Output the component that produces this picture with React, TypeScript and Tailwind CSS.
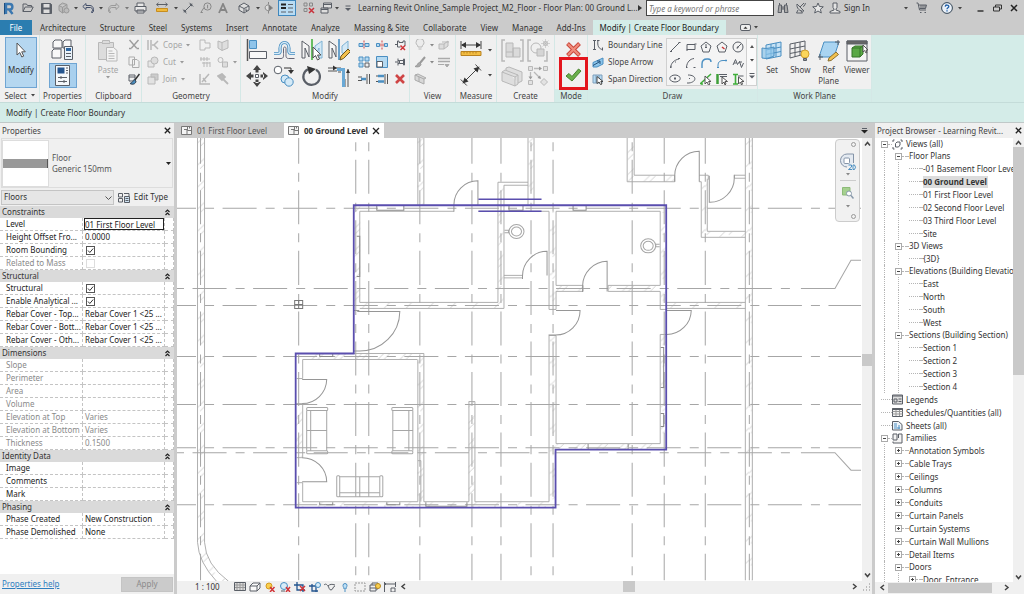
import type { ReactNode } from "react";

const DARK = "#5a5f67";
const BLUE = "#4a8fc2";
const SKY = "#b5daf2";
const OFF = "#b8b8b8";

function Ico({
  w = 12,
  h = 12,
  c = DARK,
  children,
}: {
  w?: number;
  h?: number;
  c?: string;
  children: ReactNode;
}) {
  return (
    <svg
      className="shrink-0"
      width={w}
      height={h}
      viewBox={`0 0 ${w} ${h}`}
      fill="none"
      stroke={c}
      aria-hidden="true"
    >
      {children}
    </svg>
  );
}

function Tool({
  label,
  className = "",
  children,
}: {
  label: string;
  className?: string;
  children: ReactNode;
}) {
  return (
    <button
      type="button"
      aria-label={label}
      className={`flex shrink-0 items-center justify-center ${className}`}
    >
      {children}
    </button>
  );
}

const Caret = ({ c = "#444" }: { c?: string }) => (
  <Ico w={4} h={3} c="none">
    <path d="M0 0h4L2 2.6z" fill={c} />
  </Ico>
);

/* quick access bar */

const quickTools: { label: string; slot: string; icon: ReactNode }[] = [
  {
    label: "Revit",
    slot: "w-4.5",
    icon: (
      <Ico w={12} h={13}>
        <path d="M3 12V2h3.700a2.700 2.700 0 0 1 0 5.400H3M6 7.500l3.600 4.600" stroke="#3b78b0" strokeWidth="2.400" />
        <path d="M1.500 12.300V1" stroke="#1d4e80" />
      </Ico>
    ),
  },
  {
    label: "Open",
    slot: "w-5",
    icon: (
      <Ico>
        <path d="M1 9.500V2h3.500l1 1.500h4V5M1 9.500 3.200 5h8L9 9.500z" />
      </Ico>
    ),
  },
  {
    label: "Save",
    slot: "w-4",
    icon: (
      <Ico w={11} h={11}>
        <path d="M.5.5h9l1 1v9H.5z" fill="#5a5f67" />
        <path d="M2.500 1h6v3.500h-6zM2.500 6.500h6V10h-6z" fill="#ddd" stroke="none" />
      </Ico>
    ),
  },
  {
    label: "Synchronize",
    slot: "w-5",
    icon: (
      <Ico c="#999">
        <path d="M1 3.500 4.500 1 9 2.500V8L4.500 11 1 8.500zM1 3.500l3.500 1.800L9 2.500M4.500 5.300V11" fill="#bbb" />
        <circle cx="8.500" cy="8.500" r="2.500" fill="#bbb" />
      </Ico>
    ),
  },
  { label: "Synchronize options", slot: "w-1", icon: <Caret /> },
  {
    label: "Undo",
    slot: "w-5",
    icon: (
      <Ico c="#44506a">
        <path d="M4 1.500.8 4.500 4 7.500V5.500h4.500a2.500 2.500 0 0 1 1 4.500l.5 1c3-2 1.500-7.500-2-7.500H4z" />
      </Ico>
    ),
  },
  { label: "Undo list", slot: "w-1.5", icon: <Caret /> },
  {
    label: "Redo",
    slot: "w-5",
    icon: (
      <Ico c="#9a9a9a">
        <path d="M8 1.500 11.200 4.500 8 7.500V5.500H3.500a2.500 2.500 0 0 0-1 4.500l-.5 1C-1 9 .5 3.500 4 3.500h4z" />
      </Ico>
    ),
  },
  { label: "Redo list", slot: "w-1.5", icon: <Caret c="#777" /> },
  {
    label: "Print",
    slot: "w-5",
    icon: (
      <Ico w={13}>
        <path d="M3 4V1h7v3M1 4.500h11V9H1zM3 8h7v3H3z" fill="#e8e8e8" />
      </Ico>
    ),
  },
  {
    label: "Measure",
    slot: "w-6",
    icon: (
      <Ico>
        <path d="M.5 2.500h11M2.500.8.7 2.500l1.800 1.700M9.500.8l1.800 1.700-1.800 1.700" />
        <path d="M.5 6.500h11v3H.5z" fill="#f0b93a" stroke="#c78d1f" />
      </Ico>
    ),
  },
  { label: "Measure options", slot: "w-1", icon: <Caret /> },
  {
    label: "Aligned Dimension",
    slot: "w-5",
    icon: (
      <Ico>
        <path d="m2 10 8-8M.8 7.500l3.700 3.700M7.500.8l3.700 3.700" />
        <path d="m1.500 10.500.8-3 2.200 2.200zM10.500 1.500l-3 .8 2.200 2.200z" fill={DARK} stroke="none" />
      </Ico>
    ),
  },
  {
    label: "Tag by Category",
    slot: "w-4",
    icon: (
      <Ico c="#888">
        <circle cx="7.500" cy="4.500" r="3.600" />
        <path d="M7.600 2.800v3.600M4 5.500.8 10.500M.8 10.500h2" />
      </Ico>
    ),
  },
  {
    label: "Text",
    slot: "w-4.5",
    icon: (
      <Ico w={10} h={11} c="#858585">
        <path d="M1 10 5 1l4 9M2.600 7h4.800" strokeWidth="1.800" />
      </Ico>
    ),
  },
  {
    label: "Default 3D View",
    slot: "w-6",
    icon: (
      <Ico>
        <path d="M1 4 6 1l5 3v4l-5 3-5-3z" fill="#ddd" />
        <path d="M1 4l5 2.500L11 4M6 6.500V11M8 6.500V9l1.500-.8" />
      </Ico>
    ),
  },
  { label: "View options", slot: "w-1", icon: <Caret /> },
  {
    label: "Section",
    slot: "w-4.5",
    icon: (
      <Ico w={10} h={12} c="#888">
        <path d="M4.500 3 7.500 5.500l-3 3a2.800 2.800 0 1 1 0-5.500z" fill="#ddd" />
        <path d="M5 3v5.500L8.500 6z" fill="#777" />
        <path d="M4.500 0v2.500M4.500 9v2.500" />
      </Ico>
    ),
  },
];

function TitleBar() {
  return (
    <header className="flex h-5 items-center bg-[#cbcbcb] pb-1 text-[8px] leading-3">
      {quickTools.map((t) => (
        <Tool key={t.label} label={t.label} className={`h-4 ${t.slot}`}>
          {t.icon}
        </Tool>
      ))}
      <Tool label="Thin Lines" className="h-4 w-4.5 border border-[#3f87bd] bg-[#b9dcf3]">
        <Ico w={14} h={11}>
          <path d="M1 1.500h5M1 5h5" stroke="#222" strokeWidth="2" />
          <path d="M1 9h5M8 1.500h5M8 5h5M8 9h5" />
        </Ico>
      </Tool>
      <Tool label="Close Inactive Views" className="ml-1 h-4 w-4.5">
        <Ico>
          <path d="M1 1h3v3H1zM6.500 1h3v3h-3zM1 6.500h3v3H1z" stroke="#888" />
          <path d="m6 6 5 5m0-5-5 5" stroke="#c8323c" strokeWidth="1.500" />
        </Ico>
      </Tool>
      <Tool label="Switch Windows" className="h-4 w-4">
        <Ico>
          <path d="M3.500 1h8v5h-8zM3.500 2.500h8M1 6h7v5H1zM1 7.500h7" fill="#ddd" />
        </Ico>
      </Tool>
      <Tool label="Window list" className="h-4 w-1.5">
        <Caret />
      </Tool>
      <Tool label="Customize" className="h-4 w-4">
        <Ico w={6} h={7}>
          <path d="M.5 1h5" />
          <path d="M0 3h6L3 6z" fill={DARK} stroke="none" />
        </Ico>
      </Tool>
      <h1 className="ml-0.5 shrink-0 text-[#333]">
        Learning Revit Online_Sample Project_M2_Floor - Floor Plan: 00 Ground L...
      </h1>
      <div className="flex-1" />
      <Ico w={4} h={6} c="none">
        <path d="M0 0v6l4-3z" fill="#333" />
      </Ico>
      <input
        aria-label="Search"
        placeholder="Type a keyword or phrase"
        className="ml-1 h-4 w-32 border border-[#444] bg-white px-0.5 italic leading-3 placeholder:text-[#777]"
      />
      <Tool label="Search help" className="h-4 w-4.5">
        <Ico>
          <path d="M1 10.500 2 3h2.500v7.500zM11 10.500 10 3H7.500v7.500zM4.500 5h3v2h-3zM2.500 3V1M9.500 3V1" fill="#aaa" />
        </Ico>
      </Tool>
      <Tool label="Communication Center" className="h-4 w-4.5">
        <Ico>
          <path d="M2 2a6 6 0 0 0 7 7zM3 8l-1.500 3h6L6 9M5 5l4-4M8 4.500C10 4 10 2 10.500 1" />
        </Ico>
      </Tool>
      <Tool label="Favorites" className="h-4 w-4">
        <Ico>
          <path d="m6 1 1.500 3.500 3.800.3-2.900 2.500.9 3.700L6 9l-3.300 2 .9-3.700L.7 4.800l3.800-.3z" fill="#e8e8e8" />
        </Ico>
      </Tool>
      <Tool label="Account" className="h-4 w-4.5">
        <Ico>
          <path d="M4 1h4v4.500L7 7v1l4 1.500V11H1V9.500L5 8V7L4 5.500z" fill="#e4e4e4" />
        </Ico>
      </Tool>
      <button type="button" className="shrink-0 text-[#333]">
        Sign In
      </button>
      <Tool label="Sign in options" className="ml-8 h-4 w-2">
        <Caret />
      </Tool>
      <Tool label="App Store" className="ml-1 h-4 w-4">
        <Ico>
          <path d="M.5 1H2l1.500 7H10M2.500 3h8L9.500 6.500H3.500M4 10.500h1.500M8.500 10.500H10M5 3v3.500M7 3v3.500M9 3v3.500" />
        </Ico>
      </Tool>
      <Tool label="Help" className="ml-2 h-4 w-4.5">
        <svg width="12" height="12" viewBox="0 0 12 12" aria-hidden="true">
          <circle cx="6" cy="6" r="5.400" fill="#e9f0f8" stroke="#345" />
          <path d="M4.200 4.600c.1-2.200 3.700-2 3.600 0C7.700 5.800 6 5.700 6 7.200M6 8.300v1.200" fill="none" stroke="#1f5fa8" strokeWidth="1.300" />
        </svg>
      </Tool>
      <Tool label="Help options" className="h-4 w-2">
        <Caret />
      </Tool>
      <Tool label="Minimize" className="ml-2 h-4 w-4">
        <Ico w={7} h={8}>
          <path d="M.5 7h6" stroke="#333" strokeWidth="1.500" />
        </Ico>
      </Tool>
      <Tool label="Restore" className="h-4 w-4.5">
        <Ico w={9} h={8}>
          <path d="M.5 3h6v4h-6zM2.500 3V1h6v4h-2" stroke="#333" />
        </Ico>
      </Tool>
      <Tool label="Close" className="mr-0.5 h-4 w-4">
        <Ico w={8} h={8}>
          <path d="m1 1 6 6m0-6L1 7" stroke="#222" strokeWidth="1.500" />
        </Ico>
      </Tool>
    </header>
  );
}

const ribbonTabs = [
  "Architecture",
  "Structure",
  "Steel",
  "Systems",
  "Insert",
  "Annotate",
  "Analyze",
  "Massing & Site",
  "Collaborate",
  "View",
  "Manage",
  "Add-Ins",
];

function RibbonTabs() {
  return (
    <nav className="flex h-[15px] bg-[#cbcbcb] text-[8px] leading-[15px] text-[#333]">
      <button type="button" className="mr-px w-8 shrink-0 bg-[#2b7db0] text-white">
        File
      </button>
      {ribbonTabs.map((t) => (
        <button key={t} type="button" className="shrink-0 px-[7px]">
          {t}
        </button>
      ))}
      <button type="button" className="shrink-0 bg-[#d4ece8] px-[7px] text-[#222]">
        Modify | Create Floor Boundary
      </button>
      <Tool label="Minimize Ribbon" className="ml-3.5 gap-0.5">
        <Ico w={12} h={7}>
          <rect x=".5" y=".5" width="10" height="6" rx="1.500" fill="#eee" />
          <path d="M3.500 4.800h4L5.500 2.500z" fill="#333" stroke="none" />
        </Ico>
        <Caret />
      </Tool>
    </nav>
  );
}

/* ribbon */

function Panel({
  title,
  className,
  mint,
  arrow,
  children,
}: {
  title: string;
  className: string;
  mint?: boolean;
  arrow?: boolean;
  children: ReactNode;
}) {
  return (
    <section
      className={`relative flex shrink-0 flex-col border-r border-[#d4e8e6] bg-[#f0f0f0] ${className}`}
    >
      <div className="flex h-[54px]">{children}</div>
      <h2
        className={`flex h-[13px] items-center justify-center gap-1 leading-3 ${mint ? "bg-[#d4ece8]" : ""}`}
      >
        {title}
        {arrow && <Caret />}
      </h2>
    </section>
  );
}

function ClipboardPanel() {
  return (
    <Panel title="Clipboard" className="w-14">
      <button type="button" className="flex w-9 shrink-0 flex-col items-center pt-1 pl-2 text-[#a5a5a5]">
        <Ico w={20} h={23} c={OFF}>
          <path d="M.5 3.500h4V1.500h7v2h4v17h-15z" fill="#dcdcdc" />
          <path d="M4 4.500h8M8.500 8.500h7l3.500 3V22H8.500zM10.500 12h4M10.500 14.500h6M10.500 17h6M10.500 19.500h6" fill="#f3f3f3" />
        </Ico>
        <span className="mt-0.5 leading-3">Paste</span>
        <Caret c="#999" />
      </button>
      <div className="flex flex-1 flex-col items-center gap-[5px] pt-1 pl-1">
        <Tool label="Cut to Clipboard">
          <Ico c="#9c9c9c">
            <path d="m1.500 1 7 8M10.500 1l-7 8M1 9.500h2.500M8.500 9.500H11" strokeWidth="1.400" />
          </Ico>
        </Tool>
        <Tool label="Copy to Clipboard">
          <Ico c="#ababab">
            <path d="M1 1h5.500v8H1zM4.500 3.500H9L11 5.500v6H4.500z" fill="#f2f2f2" />
          </Ico>
        </Tool>
        <Tool label="Match Type Properties">
          <Ico>
            <path d="M1 2h6v6H1zM1 4h6" />
            <path d="m11.500 1-5 6.500" stroke="#333" strokeWidth="1.500" />
            <path d="M6 6.500c-1 1-1 3-4 4 2.500 1.500 6 .5 6-2.500z" fill={BLUE} stroke="#345" />
          </Ico>
        </Tool>
      </div>
    </Panel>
  );
}

function GeometryPanel() {
  const rows = [
    {
      t: "Cope",
      a: <path d="M1 1v10M4 1v10M11 2 7 6l4 4M5 6h3" strokeWidth="1.500" />,
      b: <path d="M1 1h5v3h5v5H6v2H1z" />,
      c: <path d="m1 2 4 1.500L11 1v8l-6 2.500L1 9zM5 3.500v8" fill="#dedede" />,
    },
    {
      t: "Cut",
      a: (
        <>
          <path d="M1 5h6v6H1z" fill="#e6e6e6" />
          <circle cx="7.500" cy="4.500" r="3.500" fill="#ddd" />
        </>
      ),
      b: <path d="M1 3h10M2 1v4M5 1v4M8 1v4M3 7h8M5 6v5M8 6v5M11 6v5" />,
      c: (
        <>
          <circle cx="3.500" cy="4" r="2.500" />
          <path d="M5.500 6h5v5h-5z" fill="#ddd" />
        </>
      ),
    },
    {
      t: "Join",
      a: (
        <>
          <path d="M1 4h7v7H1z" fill="#e2e2e2" />
          <path d="M4 1h7v6H8V4H4z" fill="#ccc" />
        </>
      ),
      b: <path d="M1 1v10h10M3 9l7-8M4 5l3 4" strokeWidth="1.500" />,
      c: <path d="M1 3 5 1l3 3-3 3zM6 6l5 5" strokeWidth="1.800" fill="#bbb" />,
    },
  ];
  return (
    <Panel title="Geometry" className="w-[99px]">
      <div className="flex flex-1 flex-col gap-[5px] pt-1 pl-[5px] text-[#a5a5a5]">
        {rows.map((r) => (
          <div key={r.t} className="flex h-3 items-center">
            <button type="button" className="flex w-12 items-center gap-1 leading-3">
              <Ico c={OFF}>{r.a}</Ico>
              {r.t}
              <Caret c="#999" />
            </button>
            <Tool label={`${r.t} modifier`} className="ml-0.5 w-4">
              <Ico c={OFF}>{r.b}</Ico>
            </Tool>
            <Tool label={`${r.t} face`} className="ml-0.5 mr-0.5 w-4">
              <Ico c={OFF}>{r.c}</Ico>
            </Tool>
            {r.t === "Cut" && <Caret c="#999" />}
          </div>
        ))}
      </div>
    </Panel>
  );
}

const bigModify: { label: string; icon: ReactNode }[] = [
  {
    label: "Align",
    icon: (
      <>
        <path d="M1.500 0v22" stroke="#555" strokeWidth="1.500" />
        <path d="M3.500 1.500h7v8h-7z" fill="#8fc4ea" stroke={BLUE} />
        <path d="M3.500 12.500h17v7h-17z" fill="#f8f8f8" />
      </>
    ),
  },
  {
    label: "Offset",
    icon: (
      <>
        <path d="M1 14.500h4c3 0 2-3 2-5 0-8 9-8 9 0 0 2-1 5 2 5h4" stroke={BLUE} strokeWidth="3.200" />
        <path d="M1 14.500h4c3 0 2-3 2-5 0-8 9-8 9 0 0 2-1 5 2 5h4" stroke="#d8ecf8" strokeWidth="1.400" />
        <path d="M1 19.500h7c3 0 2.500-3 2.500-5V9.500c0-2 2.500-2 2.500 0v5c0 2-.5 5 2.500 5h6" stroke="#667" />
      </>
    ),
  },
  {
    label: "Mirror - Pick Axis",
    icon: (
      <>
        <path d="M1 2v17h3V9l4 9V7z" fill="#f5f5f5" />
        <path d="M21 2v17h-3V9l-4 9V7z" fill="#d4e9f6" stroke="#7fb2d4" />
        <path d="M11 0v21" stroke="#45b23f" strokeWidth="1.600" />
        <path d="M12 8v11l2.500-2.500L16.500 21l2-1-2-4H20z" fill="#fff" stroke="#555" />
      </>
    ),
  },
  {
    label: "Mirror - Draw Axis",
    icon: (
      <>
        <path d="M1 2v17h3V9l4 9V7z" fill="#f5f5f5" />
        <path d="M20 2v13l-6-1V7z" fill="#d4e9f6" stroke="#7fb2d4" />
        <path d="M11 0v21" stroke={BLUE} strokeWidth="1.600" />
        <path d="m12 21 1-4 7-7 2.500 2.500-7 7z" fill="#f2c14e" stroke="#6b5420" />
      </>
    ),
  },
  {
    label: "Move",
    icon: (
      <>
        <path d="m11 0 4 5H7zM11 22l4-5H7zM0 11l5-4v8zM22 11l-5-4v8zM9.500 4h3v3.500h-3zM9.500 14.500h3V18h-3zM4 9.500h3.500v3H4zM14.500 9.500H18v3h-3.500z" fill="#444" stroke="none" />
        <path d="M9.500 9.500h3v3h-3z" fill="#fff" />
      </>
    ),
  },
  {
    label: "Copy",
    icon: (
      <>
        <circle cx="5" cy="5" r="3.800" fill="#fff" />
        <path d="M11 3h7v3" stroke="#333" />
        <path d="m18 9-3-4h6z" fill="#333" stroke="none" />
        <circle cx="12" cy="14" r="4" fill="#d4e9f6" stroke={BLUE} />
        <circle cx="16" cy="17" r="4.200" fill="#d4e9f6" stroke={BLUE} />
      </>
    ),
  },
  {
    label: "Rotate",
    icon: (
      <>
        <path d="M7 4.200A8.300 8.300 0 1 0 15 4.600" strokeWidth="2.200" />
        <path d="m6 1 9 3-7 5z" fill="#333" stroke="none" />
      </>
    ),
  },
  {
    label: "Trim",
    icon: (
      <>
        <path d="M0 3h13M0 6h9M10 7h3M20 22V4M17 22v-8" stroke="#555" />
        <path d="M9 4.500h6.500V22" stroke="#6aa9d6" strokeWidth="3" />
        <path d="m5 .5 4 2.500-4 2.500zM18 8l2-4 2 4z" fill="#333" stroke="none" />
      </>
    ),
  },
];

const smallModify: { label: string; icon: ReactNode }[] = [
  {
    label: "Split Element",
    icon: (
      <>
        <path d="M1 4.500h4v3H1zM7 4.500h4v3H7z" fill={SKY} stroke={BLUE} />
        <path d="M6 1.500v9" stroke="#d04040" strokeDasharray="2 1" />
      </>
    ),
  },
  {
    label: "Split with Gap",
    icon: (
      <>
        <path d="M.5 4.500h3v3h-3zM8.500 4.500h3v3h-3z" fill={SKY} stroke={BLUE} />
        <path d="M5 4.500v3M7 4.500v3M6 1.500v2M6 8.500v2" stroke="#d04040" />
      </>
    ),
  },
  {
    label: "Unpin",
    icon: (
      <>
        <path d="M1 5.500h2M3.500 2h1.500v1.500h4V2H11v5M3.500 2v6h3" />
        <path d="m6.500 6.500 4.500 4.500m0-4.500L6.500 11" stroke="#d13438" strokeWidth="1.500" />
      </>
    ),
  },
  {
    label: "Array",
    icon: (
      <>
        <path d="M1 1h4v4H1zM7 1h4v4H7zM1 7h4v4H1z" fill={SKY} stroke={BLUE} />
        <path d="M7 7h4v4H7z" fill="#eee" />
      </>
    ),
  },
  {
    label: "Scale",
    icon: (
      <>
        <path d="M.5.5h11v11h-11z" fill={SKY} stroke={BLUE} />
        <path d="M1 5.500h5.500V11H1z" fill="#fff" />
      </>
    ),
  },
  { label: "Pin", icon: <path d="M1 6h2.500M4 2.500v7M5.500 4.500h4M5.500 7.500h4M4 4.500h1.500v3H4M9.500 3h1v6h-1z" /> },
  {
    label: "Trim Single",
    icon: (
      <>
        <path d="M0 4h4M0 7.500h4M9 1v10M11.500 1v10" stroke="#555" />
        <path d="M3 6h5" stroke={BLUE} strokeWidth="2.500" />
      </>
    ),
  },
  {
    label: "Trim Multiple",
    icon: (
      <>
        <path d="M0 3h3M0 8.500h3M9 1v10M11.500 1v10" stroke="#555" />
        <path d="M2 3h6M2 8.500h6" stroke={BLUE} strokeWidth="2.500" />
      </>
    ),
  },
  {
    label: "Delete",
    icon: <path d="m2 2 8 8m0-8-8 8" stroke="#cf4545" strokeWidth="2.600" />,
  },
];

function ModifyPanel() {
  return (
    <Panel title="Modify" className="w-[169px]">
      <div className="grid h-13 w-28 grid-cols-4 content-start items-center justify-items-center gap-y-1 pt-1 pl-0.5">
        {bigModify.map((m) => (
          <Tool key={m.label} label={m.label}>
            <Ico w={22} h={22}>
              {m.icon}
            </Ico>
          </Tool>
        ))}
      </div>
      <div className="grid w-14 grid-cols-3 content-start justify-items-center gap-y-[5px] pt-1 pl-0.5">
        {smallModify.map((m) => (
          <Tool key={m.label} label={m.label}>
            <Ico>{m.icon}</Ico>
          </Tool>
        ))}
      </div>
    </Panel>
  );
}

function ViewPanel() {
  return (
    <Panel title="View" className="w-[46px]">
      <div className="grid w-full grid-cols-[20px_4px_20px] content-start items-center justify-items-center gap-y-[5px] pt-1">
        <Tool label="Hide">
          <Ico c={OFF}>
            <path d="M4 8c0-2-2-2-2-4.500a4 4 0 0 1 8 0C10 6 8 6 8 8zM4.500 10h3" fill="#ececec" />
          </Ico>
        </Tool>
        <Caret c="#888" />
        <Tool label="Override">
          <Ico c={OFF}>
            <path d="M1 5h5v5H1zM6 5l4-3v5L6 10M4 3h4M8 3h3" fill="#ddd" />
          </Ico>
        </Tool>
        <Tool label="Line brush">
          <Ico c="#9a9a9a">
            <path d="m11 1-5 6" strokeWidth="2" />
            <path d="M5.500 6.500c-2 0-1.500 3-4.500 4 3 1 6 0 6-2.500z" fill="#aaa" />
          </Ico>
        </Tool>
        <Caret c="#888" />
        <Tool label="Linework">
          <Ico c="#aaa">
            <path d="M0 2.500h12M0 5.500h12" strokeWidth="1.500" />
            <path d="M0 8.500h6M7 8.500h4L9 11z" fill="#aaa" />
          </Ico>
        </Tool>
        <Tool label="Selection box">
          <Ico c="#aaa">
            <path d="m1 2 9 4v5L1 7zM1 2l3-1 8 4-2 1M5 4v5" fill="#d8d8d8" />
          </Ico>
        </Tool>
      </div>
    </Panel>
  );
}

function MeasurePanel() {
  return (
    <Panel title="Measure" className="w-[41px]">
      <div className="grid w-full grid-cols-[30px_8px] content-start items-center justify-items-center gap-y-0.5 pt-1">
        <Tool label="Measure Between">
          <Ico w={22} h={22}>
            <path d="M2 6h18M1 2v8M21 2v8" stroke="#444" />
            <path d="m1 6 5-3v6zM21 6l-5-3v6z" fill="#333" stroke="none" />
            <path d="M1 12.500h20v4H1zM4 12.500v2M7 12.500v2M10 12.500v2M13 12.500v2M16 12.500v2" fill="#f3bd42" stroke="#b98220" />
          </Ico>
        </Tool>
        <Caret />
        <Tool label="Dimension">
          <Ico w={22} h={24}>
            <path d="m3 20 16-16M.8 16.500l6 6M15.500 1.500l5.500 6" stroke="#444" />
            <path d="m2.500 20.500 2-6 4 4zM19.500 3.500l-6 2 4 4z" fill="#333" stroke="none" />
          </Ico>
        </Tool>
        <Caret />
      </div>
    </Panel>
  );
}

function CreatePanel() {
  return (
    <Panel title="Create" className="w-[58px]">
      <div className="grid w-full grid-cols-2 content-start justify-items-center gap-x-0.5 gap-y-0.5 px-1 pt-1">
        <Tool label="Create Assembly">
          <Ico w={23} h={23} c={OFF}>
            <path d="M4 1H1v21h3M19 1h3v21h-3" strokeWidth="1.500" />
            <path d="M5 4h7v14H5zM12 9h7v9h-7zM5 13h7" fill="#dadada" />
          </Ico>
        </Tool>
        <Tool label="Create Group">
          <Ico w={23} h={23} c={OFF}>
            <path d="M4 1H1v21h3M17 22h3V12" strokeWidth="1.500" />
            <circle cx="9" cy="9" r="5" />
            <path d="M10 10h7v7h-7z" fill="#d5d5d5" />
            <circle cx="18.500" cy="4.500" r="2" />
            <path d="M18.500 0v9M14 4.500h9M15.500 1.500l6 6M21.500 1.500l-6 6" strokeWidth=".6" />
          </Ico>
        </Tool>
        <Tool label="Create Parts">
          <Ico w={23} h={23} c={OFF}>
            <path d="M1 8v9l13 5v-9zM1 8l3-2 13 5-3 2M17 11v9l-3 2M5 6V4l3-1 13 5v9l-4 2" fill="#dedede" />
          </Ico>
        </Tool>
        <Tool label="Create Similar">
          <Ico w={23} h={23} c={OFF}>
            <path d="M1.500 2.500h4v4h-4zM16.500 2.500h4v4h-4zM1.500 16.500h4v4h-4zM17 14.500l3.500 3.500-3.500 3.500-3.500-3.500z" fill="#e2e2e2" />
            <path d="M7 4.500h7M3.500 8v6M7 8l6 6" strokeWidth="1.300" />
            <path d="m15 4.500-3-2v4zM3.500 15.500l-2-3h4zM14 15l-3.500-1 2.500-2.500z" fill="#999" stroke="none" />
          </Ico>
        </Tool>
      </div>
    </Panel>
  );
}

const drawModes: { label: string; icon: ReactNode }[] = [
  {
    label: "Boundary Line",
    icon: <path d="M2.500 1v10M6 1c-1 6 1 9 4.500 9.500M1 1.500h3M1 10.500h3M5 1.500h2.500M10.500 8.500v3" />,
  },
  {
    label: "Slope Arrow",
    icon: (
      <>
        <path d="M1 6.500 11 2v6l-6 3H1z" fill="#8cc5ea" stroke={BLUE} />
        <path d="m1 9.500 7-4M8 8V5H5" stroke="#24507a" />
      </>
    ),
  },
  {
    label: "Span Direction",
    icon: (
      <>
        <path d="M1 2h9v8H1zM4 2v8M7 2v8" fill={SKY} stroke="#7f9fbc" />
        <path d="M5 3.500v7L7 9l1.500 2.500L10 11 8.800 8.500H11z" fill="#fff" stroke="#444" />
      </>
    ),
  },
];

const shapes: { label: string; icon: ReactNode }[] = [
  { label: "Line", icon: <path d="M2 10 10 2M1 10.500h2M9.500 1.500h2" /> },
  { label: "Rectangle", icon: <path d="M2 3.500h8v5H2zM1 9h2M9.500 3h2" /> },
  { label: "Inscribed Polygon", icon: <path d="m6 1 5 4-2 6H3L1 5zM6 3v4M5 6.500h2" /> },
  {
    label: "Circumscribed Polygon",
    icon: (
      <>
        <path d="m6 1 5 4-2 6H3L1 5z" />
        <path d="m6 6 2.500 2" stroke="#c33" strokeWidth="1.500" />
      </>
    ),
  },
  {
    label: "Circle",
    icon: (
      <>
        <circle cx="6" cy="6" r="5" />
        <path d="m5 7 4-4M6 5v2H4.500" />
      </>
    ),
  },
  { label: "Start-End-Radius Arc", icon: <path d="M1.500 11C2 6 5 3 10 2M1 10h2M9 1.500h2M6 5h1" /> },
  { label: "Center-ends Arc", icon: <path d="M1.500 10C2 5 5 2 9 1.500M8.500 10.500h2M1 10.500h1.500" /> },
  { label: "Tangent End Arc", icon: <path d="M2 11V7c0-3 2-5 5-5h1c2 0 3 1 3 3" stroke={BLUE} strokeWidth="1.400" /> },
  { label: "Fillet Arc", icon: <path d="M2 11V8c0-3 2-4.500 5-4.500h4M1 10.500h2M10 2.500v2" stroke={BLUE} /> },
  { label: "Spline", icon: <path d="M1 8 3.500 2.500l2 5 2-3 2 6L11.500 6M2 6h2.500M7 5h3" /> },
  {
    label: "Ellipse",
    icon: (
      <>
        <ellipse cx="6" cy="5.500" rx="5.200" ry="3.500" />
        <path d="M6 4v3M5 5.500h2" />
      </>
    ),
  },
  { label: "Partial Ellipse", icon: <path d="M3 2c9 0 9 7 1 8M2 10h2M4 5.500h1" /> },
  {
    label: "Pick Lines",
    icon: (
      <>
        <path d="m0 11 11-10M1 11h2" stroke="#3fae3a" strokeWidth="1.500" />
        <path d="M5 3v8l2-2 1.500 3L10 11 8.500 8.500H11z" fill="#fff" stroke="#555" />
      </>
    ),
  },
  {
    label: "Pick Walls",
    icon: (
      <>
        <path d="M1.500 1v10" stroke="#3f9f3a" strokeWidth="2.500" />
        <path d="M3 1.500h8M4 3.500h7" />
        <path d="M6 4v7l2-2 1 3 1-1-1-2.500h2.500z" fill="#fff" stroke="#555" />
      </>
    ),
  },
  {
    label: "Pick Supports",
    icon: (
      <>
        <path d="M1 1.500h5M3.500 1.500V11M1 11h5" stroke="#3fae3a" strokeWidth="1.600" />
        <path d="M6 3h5.500" />
        <path d="M6.500 4v7l2-2 1 3 1-1-1-2.500H12z" fill="#fff" stroke="#555" />
      </>
    ),
  },
];

function DrawPanel() {
  return (
    <Panel title="Draw" mint className="w-[170px]">
      <div className="flex w-[78px] shrink-0 flex-col gap-[5px] pt-1 pl-1">
        {drawModes.map((d) => (
          <button key={d.label} type="button" className="flex items-center gap-1 whitespace-nowrap leading-3">
            <Ico>{d.icon}</Ico>
            {d.label}
          </button>
        ))}
      </div>
      <div className="mt-[3px] flex h-12 flex-1 border border-[#d0d0d0] bg-[#f4f4f4]">
        <div className="grid flex-1 grid-cols-5 content-start justify-items-center gap-y-1 pt-0.5">
          {shapes.map((s) => (
            <Tool key={s.label} label={s.label}>
              <Ico>{s.icon}</Ico>
            </Tool>
          ))}
        </div>
        <div className="flex w-2.5 flex-col items-center justify-around border-l border-[#d0d0d0] bg-[#fafafa]">
          <Ico w={4} h={3} c="none">
            <path d="M0 3h4L2 0z" fill="#555" />
          </Ico>
          <Caret />
          <Ico w={6} h={6}>
            <path d="M.5.5h5" />
            <path d="M0 2.500h6l-3 3z" fill={DARK} stroke="none" />
          </Ico>
        </div>
      </div>
    </Panel>
  );
}

const planeTools: { label: string; icon: ReactNode }[] = [
  {
    label: "Set",
    icon: (
      <>
        <path d="m5 5 15-3v14L5 19z" fill="#c6e2f5" stroke={BLUE} />
        <path d="M10 4v14M15 3v14M5 10l15-3M5 14.500l15-3" stroke={BLUE} />
        <path d="M1 8c4 1 8 0 12-1v9c-4 2-8 3-12 2z" fill="#8cc5ea" fillOpacity=".7" stroke={BLUE} />
      </>
    ),
  },
  {
    label: "Show",
    icon: (
      <>
        <path d="m1 4 15-3v13L1 18zM6 3v14M11 2v13M1 9l15-3M1 13.500l15-3" />
        <circle cx="16" cy="14" r="4" fill="#fbd65c" stroke="#d0a030" />
        <path d="M14.500 18.500h3v2h-3z" fill="#999" />
      </>
    ),
  },
  {
    label: "Ref Plane",
    icon: (
      <>
        <path d="M6 2h15l-5 15H1z" fill="#a9d4f1" stroke={BLUE} />
        <path d="M0 17h5M2 14v6M17 2h5M20 0v5" />
        <path d="m10 21 1-3 7-6 2.500 2.500-7.500 6z" fill="#f2c14e" stroke="#8b7030" />
      </>
    ),
  },
  {
    label: "Viewer",
    icon: (
      <>
        <path d="M1 1h20v20H1z" fill="#f5f5f5" />
        <path d="M1 1h20v3H1z" fill="#666" />
        <path d="m6 8 3-2h8v8l-3 3H6z" fill="#5aa845" stroke="#37752a" />
        <path d="M6 8h8v9M14 8l3-2" stroke="#37752a" />
        <path d="M17 5v7l1.500-1.500L20 13l1-.5-1-2.500h2z" fill="#fff" stroke="#555" />
      </>
    ),
  },
];

function Ribbon() {
  return (
    <div className="flex h-[67px] bg-[#d4ece8] text-[8px] text-[#444]">
      <Panel title="Select" arrow className="w-10">
        <button
          type="button"
          className="mt-0.5 ml-[5px] flex h-[51px] w-8 flex-col items-center border border-[#6fa5d3] bg-[#b5d7f0] pt-1 text-[#333]"
        >
          <Ico w={10} h={16}>
            <path d="M1 1v12l2.800-2.500 2 4.500 1.900-.9-2-4.300H9.300z" fill="#fff" stroke="#555" />
          </Ico>
          <span className="mt-1.5 leading-3">Modify</span>
        </button>
      </Panel>
      <Panel title="Properties" className="w-[46px]">
        <div className="flex w-full flex-col items-center pt-1">
          <Tool label="Type Properties">
            <Ico w={23} h={22}>
              <path d="M2 3 4 1h6l1 1v7H2zM12 3l2-2h6v8h-8zM1 12l2-2h7v9H1z" fill="#f8f8f8" />
              <path d="M13.500 7.500h8v13h-8z" fill="#e9f2fa" />
              <path d="M15 9h5v3h-5z" fill="#2f66a0" stroke="none" />
              <path d="M15 14.500h5M15 17.500h5" />
            </Ico>
          </Tool>
          <Tool label="Properties" className="mt-0.5 h-[25px] w-7 border border-[#6fa5d3] bg-[#a9d0ee]">
            <Ico w={15} h={21}>
              <path d="M.5.5h14v20H.5z" fill="#f4f8fb" />
              <path d="M2.500 2.500h7v6h-7z" fill="#24558f" stroke="none" />
              <path d="M11 3h2M11 5.500h2M11 8h2M3 12.500h9M3 16.500h9M6 11v3M9 15v3" />
            </Ico>
          </Tool>
        </div>
      </Panel>
      <ClipboardPanel />
      <GeometryPanel />
      <ModifyPanel />
      <ViewPanel />
      <MeasurePanel />
      <CreatePanel />
      <Panel title="Mode" mint className="w-[33px]">
        <div className="flex w-full flex-col items-center gap-2.5 pt-1.5 pl-1">
          <Tool label="Cancel Edit Mode">
            <Ico w={17} h={17}>
              <path d="m2.500 2.500 12 12m0-12-12 12" stroke="#c9463a" strokeWidth="4" />
              <path d="m3 3 11 11m0-11-11 11" stroke="#f08d7c" strokeWidth="2.200" />
            </Ico>
          </Tool>
          <Tool label="Finish Edit Mode">
            <Ico w={17} h={14}>
              <path d="m1 8 3-2.500 3 3L13.500 1l2.500 2L7 13z" fill="#6ab04c" stroke="#47832f" />
            </Ico>
          </Tool>
        </div>
        <div className="absolute -right-px top-[22px] h-[33px] w-[29px] border-3 border-[#e3151d]" />
      </Panel>
      <DrawPanel />
      <Panel title="Work Plane" mint className="w-[114px]">
        <div className="flex w-full justify-around pt-[5px]">
          {planeTools.map((p) => (
            <button key={p.label} type="button" className="flex w-7 flex-col items-center">
              <Ico w={22} h={22}>
                {p.icon}
              </Ico>
              <span className="mt-0.5 leading-[11px]">{p.label}</span>
            </button>
          ))}
        </div>
      </Panel>
    </div>
  );
}

/* properties palette */

type Value = string | boolean | undefined;
const groups: { name: string; rows: [string, Value, boolean?][] }[] = [
  {
    name: "Constraints",
    rows: [
      ["Level", "01 First Floor Level"],
      ["Height Offset Fro...", "0.0000"],
      ["Room Bounding", true],
      ["Related to Mass", false, true],
    ],
  },
  {
    name: "Structural",
    rows: [
      ["Structural", true],
      ["Enable Analytical ...", true],
      ["Rebar Cover - Top...", "Rebar Cover 1 <25 ..."],
      ["Rebar Cover - Bott...", "Rebar Cover 1 <25 ..."],
      ["Rebar Cover - Oth...", "Rebar Cover 1 <25 ..."],
    ],
  },
  {
    name: "Dimensions",
    rows: [
      ["Slope", "", true],
      ["Perimeter", "", true],
      ["Area", "", true],
      ["Volume", "", true],
      ["Elevation at Top", "Varies", true],
      ["Elevation at Bottom", "Varies", true],
      ["Thickness", "0.1500", true],
    ],
  },
  {
    name: "Identity Data",
    rows: [
      ["Image", ""],
      ["Comments", ""],
      ["Mark", ""],
    ],
  },
  {
    name: "Phasing",
    rows: [
      ["Phase Created", "New Construction"],
      ["Phase Demolished", "None"],
    ],
  },
];

function Check({ label, checked, disabled }: { label: string; checked: boolean; disabled?: boolean }) {
  return (
    <span className="ml-0.5 grid size-[9px]">
      <input
        type="checkbox"
        aria-label={label}
        defaultChecked={checked}
        disabled={disabled}
        className="peer col-start-1 row-start-1 size-[9px] appearance-none border border-[#555] bg-white disabled:border-[#ddd]"
      />
      <svg
        viewBox="0 0 9 9"
        className="pointer-events-none invisible col-start-1 row-start-1 size-[9px] peer-checked:visible"
        fill="none"
        stroke="#333"
        aria-hidden="true"
      >
        <path d="m2 4.500 1.800 2L7.200 2.500" />
      </svg>
    </span>
  );
}

function PropertyRow({ name, value, muted }: { name: string; value: Value; muted?: boolean }) {
  const cell = "h-[13px] overflow-hidden whitespace-nowrap border-b border-r border-dashed border-[#c4c4c4] p-0";
  return (
    <tr className={muted ? "text-[#8a8a8a]" : "text-[#222]"}>
      <th scope="row" className={`${cell} pl-1.5 text-left font-normal`}>
        {name}
      </th>
      <td className={`${cell} pl-px`}>
        {typeof value === "boolean" ? (
          <Check label={name} checked={value} disabled={muted} />
        ) : name === "Level" ? (
          <input
            aria-label={name}
            defaultValue={value}
            className="block h-3 w-full border border-[#222] bg-white leading-[10px]"
          />
        ) : (
          <span className="pl-px">{value}</span>
        )}
      </td>
      <td className={cell} />
    </tr>
  );
}

function Properties() {
  return (
    <aside className="flex w-[174px] shrink-0 flex-col bg-[#f0f0f0]">
      <div className="flex h-[15px] items-center justify-between pr-0.5 pl-0.5 text-[#444]">
        <h2>Properties</h2>
        <Tool label="Close Properties" className="mr-px">
          <Ico w={7} h={7}>
            <path d="m.8.8 5.400 5.400m0-5.400L.8 6.200" stroke="#222" strokeWidth="1.300" />
          </Ico>
        </Tool>
      </div>
      <button type="button" className="mx-px flex h-[50px] items-center border border-[#ddd] pr-px text-left text-[#555]">
        <span className="flex h-[47px] w-[47px] shrink-0 items-center border border-[#ddd] bg-white">
          <span className="h-[9px] w-full border-r border-[#555] bg-[#999]" />
        </span>
        <span className="flex-1 pl-[3px] leading-[11px]">
          Floor
          <br />
          Generic 150mm
        </span>
        <Ico w={5} h={3} c="none">
          <path d="M0 0h5L2.500 3z" fill="#222" />
        </Ico>
      </button>
      <div className="flex h-[18px] items-center text-[#333]">
        <div className="relative ml-px flex-1">
          <select
            aria-label="Type filter"
            className="h-[15px] w-full appearance-none border border-[#c4c4c4] bg-[#e6e6e6] pl-0.5 leading-3"
          >
            <option>Floors</option>
          </select>
          <svg className="pointer-events-none absolute right-0.5 top-1.5" width="7" height="5" viewBox="0 0 7 5" fill="none" stroke="#555">
            <path d="m.5.5 3 3 3-3" />
          </svg>
        </div>
        <button type="button" className="mr-1.5 ml-1 flex items-center gap-1">
          <Ico w={12} h={11}>
            <path d="M.5 1.500h4v3.500h-4zM.5 6.500h4V10h-4zM6 1.500h5V4" />
            <path d="M6.500 4.500h5v6h-5z" fill="#cfe3f3" />
            <path d="M7.500 6.500h3M7.500 8.500h3" />
          </Ico>
          Edit Type
        </button>
      </div>
      <div className="flex-1 overflow-hidden bg-white">
        <table className="w-full table-fixed border-separate border-spacing-0 leading-3">
          <colgroup>
            <col />
            <col className="w-[82px]" />
            <col className="w-[9px]" />
          </colgroup>
          {groups.map((g) => (
            <tbody key={g.name}>
              <tr className="bg-[#dadada] text-[#333]">
                <th colSpan={3} scope="rowgroup" className="h-3 p-0 pr-1 pl-0.5 font-normal">
                  <span className="flex items-center justify-between">
                    {g.name}
                    <Ico w={5} h={7}>
                      <path d="m.5 3 2-2 2 2M.5 6l2-2 2 2" stroke="#222" strokeWidth="1.200" />
                    </Ico>
                  </span>
                </th>
              </tr>
              {g.rows.map(([name, value, muted]) => (
                <PropertyRow key={name} name={name} value={value} muted={muted} />
              ))}
            </tbody>
          ))}
        </table>
      </div>
      <div className="flex h-5 items-center justify-between pr-px pl-0.5">
        <a href="#help" className="text-[#2f7fbf] underline">
          Properties help
        </a>
        <button type="button" disabled className="h-[15px] w-[52px] border border-[#c4c4c4] bg-[#cbcbcb] text-[#8a8a8a]">
          Apply
        </button>
      </div>
    </aside>
  );
}

/* floor plan */

const LONG_V = [298.5, 419.5, 471.5, 500.5, 663.5, 704.5];
const SHORT_V = [355.5, 368.5, 530.5, 552.5, 631.5];
const GRID_H = [208.5, 305.5, 356.5, 404.5, 447.5, 504.5];
const WALLS: [number, number, number, number][] = [
  [198, 138, 6, 404],
  [417, 138, 6, 67],
  [528, 138, 5, 67],
  [354, 206, 6, 96],
  [360, 303, 138, 5],
  [498, 183, 5, 125],
  [549, 212, 6, 98],
  [549, 335, 6, 166],
  [556, 286, 26, 5],
  [608, 286, 52, 5],
  [660, 212, 5, 98],
  [660, 335, 5, 110],
  [556, 444, 104, 5],
  [627, 138, 6, 44],
  [633, 176, 41, 6],
  [701, 182, 5, 55],
  [701, 232, 44, 5],
  [666, 303, 79, 5],
  [745, 138, 6, 442],
  [302, 354, 115, 5],
  [296, 403, 6, 54],
  [417, 354, 6, 148],
  [468, 401, 6, 101],
  [296, 502, 253, 5],
];

function Sofa({ at }: { at: string }) {
  return (
    <g transform={at}>
      <rect x="0" y="0" width="21" height="3" rx="1" />
      <rect x="0" y="43" width="21" height="3" rx="1" />
      <path d="M0 3v40M4 3v40M20 3v40M0 23h20" />
    </g>
  );
}

function FloorPlan() {
  return (
    <svg
      className="h-full w-full"
      viewBox="177 138 684 443"
      preserveAspectRatio="xMidYMid slice"
      fill="none"
      stroke="#a6a6a6"
      role="img"
      aria-label="00 Ground Level floor plan"
    >
      <defs>
        <pattern id="hatch" width="22" height="22" patternUnits="userSpaceOnUse">
          <path d="M-2 13 13-2M2 15 17 0M8 24 24 8M-2 2 2-2" stroke="#c6c6c6" strokeWidth=".8" />
        </pattern>
      </defs>
      <g fill="url(#hatch)" stroke="none">
        {WALLS.map(([x, y, w, h]) => (
          <rect key={`${x}-${y}-${h}`} x={x} y={y} width={w} height={h} />
        ))}
        <path d="M198 542q1 20 19 39h11q-22-16-24-39z" />
      </g>
      <g strokeDasharray="34 9 9 8.500">
        {GRID_H.map((y) => (
          <path key={y} d={`M162 ${y}H860`} />
        ))}
        <path d="M132 288.500H795M132 452.500H795" />
        {SHORT_V.map((x) => (
          <path key={x} d={`M${x} 99.500V580`} />
        ))}
        {LONG_V.map((x) => (
          <path key={x} d={`M${x} 130V580`} />
        ))}
        <path d="M200.500 130V580M748.500 130V580" />
      </g>
      <path d="M800 288.500h34l16-28h10M800 452.500h34l16 17.500h10" />
      {/* wall faces */}
      <g strokeWidth=".9">
        <path d="M197.500 138V542q1 20 19 39M204.500 138V542q1 22 24 39" />
        <path d="M417.500 138v67M423.500 138v67M527.500 138v67M533.500 138v67M527.500 182.500h-30v120h-138v-91h94M503.500 308.500h-144M503.500 308.500V185.500h24" />
        <path d="M478 211.500h70.500v98h7v-18h27v-6h-27v-74h104v74h-52v6h52v18h6M503.500 275.500h18.500v2.500h-18.500M548.500 501.500v-166h7v108h104v-109h6" />
        <path d="M626.500 138v44h47.500v-6.500h-40.500V138M700.500 182v55.500h44M706.500 179v52.500h38M698.500 182h2M698.500 175.500h9v4.500M744.500 175.500h-11v3h11M744.500 138v442M751.500 138v442M666 302.500h78.500M666 308.500h78.500" />
        <path d="M302.500 378.500h-6M302.500 378.500V359.500H417M353 353.500h70.500V501.500h45v-100h6v100h74M417.500 359.500v142h-115v-19h-6M296 403.500h6.500v54h-6M417.500 460.500h3v41" />
      </g>
      {/* windows */}
      <g stroke="#8a8a8a">
        <path d="M376.500 206v4.500h27V206M508.500 206v4.500h14V206M572.500 206v4.500h13V206M356.500 236.500h3v40h-3M587.500 444v5h40v-5M660 347.500h3v40h-3M660 413.500h3v13h-3M319.500 354v2.500h13V354M319.500 502v2.500h13V502M386.500 502v2.500h13V502M425.500 502v4h41v-4" />
      </g>
      {/* doors */}
      <g stroke="#969696">
        <path d="M477.500 205V181a24 24 0 0 0-24 24v7M477.500 205h-.5M546.500 275.500V251.500a24.500 24.500 0 0 0-24.500 24.500v3M606.500 291.500V261.500a25 25 0 0 0-24.500 24.500v6" />
        <path d="M555.500 310.500H579.500a24.500 24.500 0 0 1-24.500 24.500h-7M666 310.500h24.500a24.500 24.500 0 0 1-24.500 24" />
        <path d="M698.500 182V151.500a24.500 24.500 0 0 0-24.500 24.500v6M708.500 176v26.500a24.500 24.500 0 0 0 25-24.500v-3" />
        <path d="M302 379.500h24.500a24.500 24.500 0 0 1-24.500 24M302 481.500h24.500a24.500 24.500 0 0 0-24.500-24M353 310.500h6M357 311.500h42.500a40 40 0 0 1-40 39.500h-6" />
      </g>
      <g>
        <ellipse cx="516" cy="231.700" rx="7.500" ry="7" />
        <ellipse cx="516" cy="231.700" rx="5" ry="4.500" />
        <path d="M504 230.500h4v2.500h-4" />
        <ellipse cx="647.500" cy="246" rx="7.500" ry="7" />
        <ellipse cx="647.500" cy="246" rx="5" ry="4.500" />
        <path d="M659 244.500h-4v2.500h4" />
      </g>
      <Sofa at="translate(306.500 407.500)" />
      <Sofa at="translate(412.500 407.500) scale(-1 1)" />
      <Sofa at="translate(336.500 496.500) rotate(-90)" />
      {/* sketch boundary */}
      <path
        d="M353.500 205.500H665.500V449.500H555V507.500H295.500V353.500H353.500z"
        stroke="#5a4eae"
        strokeWidth="1.800"
      />
      <path d="M478 199.500h63M478 211.500h63" stroke="#5a4eae" strokeWidth="1.600" />
      <path d="M294.500 300.500h8v8h-8zM294.500 304.500h8M298.500 300.500v8" stroke="#777" />
    </svg>
  );
}

const viewControls: { label: string; icon: ReactNode }[] = [
  {
    label: "Detail Level",
    icon: (
      <>
        <path d="M.5 1.500h11v8H.500z" fill="#ddd" />
        <path d="M1 4h10M1 6.500h10M3 2v7M6 2v7M9 2v7" stroke="#999" />
      </>
    ),
  },
  { label: "Visual Style", icon: <path d="M1 5h7v5H1zM1 5l3-3h7v5l-3 3M8 5l3-3" fill="#fafafa" /> },
  {
    label: "Sun Path Off",
    icon: (
      <>
        <circle cx="5" cy="5" r="3" fill="#f9cf4e" stroke="#d49a20" />
        <path d="m6 6 4.500 5m0-5L6 11" stroke="#d13438" strokeWidth="1.500" />
      </>
    ),
  },
  {
    label: "Shadows Off",
    icon: (
      <>
        <circle cx="5" cy="5" r="3.500" fill="#d8ecf8" stroke={BLUE} />
        <path d="M2 10h4" />
        <path d="m7 6 4 5m0-5-4 5" stroke="#d13438" strokeWidth="1.500" />
      </>
    ),
  },
  {
    label: "Crop View",
    icon: (
      <>
        <path d="M3 1v8h8M0 4h9v7" stroke="#24558f" strokeWidth="1.300" />
        <path d="m6 5 5 5m0-5-5 5" stroke="#d13438" strokeWidth="1.500" />
      </>
    ),
  },
  {
    label: "Show Crop Region",
    icon: (
      <>
        <path d="M3 3v7h6M0 5h7v6" stroke="#24558f" strokeWidth="1.300" />
        <circle cx="9" cy="4" r="2.500" fill="#d8ecf8" stroke={BLUE} />
      </>
    ),
  },
  { label: "Temporary Hide", icon: <path d="M0 4c2-2 3 0 4 1s1 4 3 4 2-4 4-4M4 5c2-2 4-2 7-1" /> },
  {
    label: "Reveal Hidden",
    icon: <path d="M5 8C5 6 4 6 4 4.500a2 2 0 0 1 4 0C8 6 7 6 7 8zM5 10h2" fill="#bfe0f6" stroke={BLUE} />,
  },
  {
    label: "Temporary View Properties",
    icon: <path d="M1 2h10v8H1z" stroke="#999" strokeDasharray="2 1" />,
  },
  {
    label: "Analytical Model",
    icon: (
      <>
        <path d="M1 4h6v6H1zM3 4V2h6v6H7M1 7h6" />
        <circle cx="9" cy="5" r="2.500" fill="#f9cf4e" stroke="#b88a20" />
      </>
    ),
  },
  {
    label: "Reveal Constraints",
    icon: <path d="M.5 1v10M11.500 1v5M1 3h10M7 7h4v4H7zM2 2 1 3l1 1" />,
  },
];

const SheetIcon = () => (
  <Ico w={12} h={11} c="#777">
    <path d="M.5 1.500h10v8H.500z" fill="#f4f4f4" />
    <path d="M6.500 1.500v4h4M3 4.500h3v5M8.500 1.500v2" />
  </Ico>
);

function NavBar() {
  return (
    <div className="absolute right-0.5 top-px flex h-[83px] w-[25px] flex-col items-center rounded border border-[#ccc] bg-[#f1f1f1] py-0.5">
      <Ico w={17} h={5} c="#999">
        <circle cx="14.500" cy="2.500" r="2" />
      </Ico>
      <Tool label="Steering Wheel" className="mt-1.5">
        <Ico w={18} h={18} c="#8594a8">
          <path d="M14.500 10V1H8a6.500 6.500 0 1 0 0 13" fill="#e4eaf1" />
          <rect x="5" y="5" width="5.500" height="5.500" rx="1" fill="#fff" />
          <path d="M9.500 12h3v2l-3 2.500h3.500M14 12v4.500h1.500q2-2.200 0-4.500z" stroke={BLUE} />
        </Ico>
      </Tool>
      <div className="mt-0.5">
        <Caret c="#888" />
      </div>
      <div className="my-1 h-px w-4 bg-[#ccc]" />
      <Tool label="Zoom" className="mt-0.5">
        <Ico w={12} h={12}>
          <path d="M.5.5h7.500v7.500H.5z" fill="#a5d08f" stroke="#8dbb78" />
          <circle cx="7" cy="6.500" r="2.500" fill="#fff" stroke="#89a" />
          <path d="m9 8.500 2.500 3" stroke="#89a" strokeWidth="1.500" />
        </Ico>
      </Tool>
      <div className="mt-1.5">
        <Caret c="#888" />
      </div>
      <div className="flex-1" />
      <Ico w={17} h={5} c="#999">
        <circle cx="14.500" cy="2.500" r="2" />
      </Ico>
    </div>
  );
}

const chevron = {
  up: "m1 5.500 2.500-3 2.500 3",
  down: "m1 2.500 2.500 3 2.500-3",
  left: "M5 1 2 3.500 5 6",
  right: "M2 1l3 2.500L2 6",
};

const Chevron = ({ dir }: { dir: keyof typeof chevron }) => (
  <Ico w={7} h={8}>
    <path d={chevron[dir]} stroke="#444" strokeWidth="1.500" />
  </Ico>
);

function Canvas() {
  return (
    <main className="flex min-w-0 flex-1 flex-col">
      <div className="flex h-[15px] shrink-0 items-stretch bg-[#cbcbcb] text-[#555]">
        <button type="button" className="flex w-[107px] items-center gap-1 pl-1">
          <SheetIcon />
          01 First Floor Level
        </button>
        <div className="flex items-center bg-white pl-1 text-[#333]">
          <button type="button" className="flex items-center gap-1 font-bold">
            <SheetIcon />
            00 Ground Level
          </button>
          <Tool label="Close view" className="mx-1">
            <Ico w={8} h={8}>
              <path d="m1 1 6 6m0-6L1 7" stroke="#222" strokeWidth="1.300" />
            </Ico>
          </Tool>
        </div>
        <Tool label="View list" className="mr-1 ml-auto">
          <Ico w={7} h={6}>
            <path d="M1 .5h5" />
            <path d="M0 2h7L3.500 5.500z" fill="#222" stroke="none" />
          </Ico>
        </Tool>
      </div>
      <div className="flex min-h-0 flex-1">
        <div className="relative min-w-0 flex-1 overflow-hidden bg-white">
          <FloorPlan />
          <NavBar />
        </div>
        <div className="flex w-2.5 flex-col items-center justify-between bg-[#f0f0f0] py-0.5">
          <Chevron dir="up" />
          <div className="h-3 w-full bg-[#c9c9c9]" />
          <Chevron dir="down" />
        </div>
      </div>
      <div className="flex h-[11px] shrink-0 items-center bg-[#f0f0f0]">
        <button type="button" className="w-[57px] pl-[18px] text-left text-[#333]">
          1 : 100
        </button>
        <div className="flex gap-[3px]">
          {viewControls.map((v) => (
            <Tool key={v.label} label={v.label}>
              <Ico h={11}>{v.icon}</Ico>
            </Tool>
          ))}
        </div>
        <div className="flex flex-1 items-center">
          <div className="pl-1">
            <Chevron dir="left" />
          </div>
          <div className="ml-auto h-[11px] w-3 bg-[#c9c9c9]" />
          <div className="ml-auto pr-1">
            <Chevron dir="right" />
          </div>
        </div>
        <Ico w={10} h={10} c="#aaa">
          <path d="M7 2h1M7 5h1M4 5h1M7 8h1M4 8h1M1 8h1" strokeWidth="1.500" />
        </Ico>
      </div>
    </main>
  );
}

/* project browser */

type Node = { t: string; d: number; m?: "+" | "-"; icon?: ReactNode; bold?: boolean };

const leaf = (t: string): Node => ({ t, d: 2 });
const family = (t: string): Node => ({ t, d: 1, m: "+" });

const tree: Node[] = [
  {
    t: "Views (all)",
    d: 0,
    m: "-",
    icon: (
      <Ico w={11} h={11}>
        <path d="M1 3V1h1.500M8.500 1H10v2M10 8v2H8.500M2.500 10H1V8M3.500 4.500 5 3h3v3L6.500 8h-3z" />
      </Ico>
    ),
  },
  { t: "Floor Plans", d: 1, m: "-" },
  leaf("-01 Basement Floor Level"),
  { ...leaf("00 Ground Level"), bold: true },
  leaf("01 First Floor Level"),
  leaf("02 Second Floor Level"),
  leaf("03 Third Floor Level"),
  leaf("Site"),
  { t: "3D Views", d: 1, m: "-" },
  leaf("{3D}"),
  { t: "Elevations (Building Elevation)", d: 1, m: "-" },
  leaf("East"),
  leaf("North"),
  leaf("South"),
  leaf("West"),
  { t: "Sections (Building Section)", d: 1, m: "-" },
  leaf("Section 1"),
  leaf("Section 2"),
  leaf("Section 3"),
  leaf("Section 4"),
  {
    t: "Legends",
    d: 0,
    icon: (
      <Ico w={11} h={11}>
        <path d="M.5 1h10v9H.500z" fill="#ddd" />
        <path d="M.5 2h10M2 5h3v3H2zM6.500 5h3M6.500 7.500h3" />
      </Ico>
    ),
  },
  {
    t: "Schedules/Quantities (all)",
    d: 0,
    icon: (
      <Ico w={11} h={11}>
        <path d="M.5 1.500h10v8H.500z" fill="#f4f4f4" />
        <path d="M.5 4.500h10M.5 7h10M4 2v7M7.500 2v7" stroke="#999" />
        <path d="M.5 2h10" strokeWidth="2" />
      </Ico>
    ),
  },
  {
    t: "Sheets (all)",
    d: 0,
    icon: (
      <Ico w={11} h={11}>
        <path d="M.5 1.500h6l3.500 3V10H.5z" fill="#eef4fa" />
        <path d="M2 4h3M2 6h3M2 8h6M7 5v4" stroke={BLUE} />
      </Ico>
    ),
  },
  {
    t: "Families",
    d: 0,
    m: "-",
    icon: (
      <Ico w={11} h={11}>
        <path d="M1 1h4v6H1zM6.500 1H10v9H1V8.500M6.500 1v4" fill="#f4f4f4" />
      </Ico>
    ),
  },
  family("Annotation Symbols"),
  family("Cable Trays"),
  family("Ceilings"),
  family("Columns"),
  family("Conduits"),
  family("Curtain Panels"),
  family("Curtain Systems"),
  family("Curtain Wall Mullions"),
  family("Detail Items"),
  { t: "Doors", d: 1, m: "-" },
  { t: "Door_Entrance", d: 2, m: "+" },
];

function TreeRow({ n }: { n: Node }) {
  const box = n.m && (
    <span className="grid size-[7px] shrink-0 place-items-center border border-[#aaa] bg-white">
      <svg width="3" height="3" viewBox="0 0 3 3" stroke="#444" aria-hidden="true">
        <path d={n.m === "+" ? "M0 1.500h3M1.500 0v3" : "M0 1.500h3"} />
      </svg>
    </span>
  );
  const twig = "h-px border-t border-dotted border-[#b5b5b5]";
  return (
    <li className={`flex items-center ${n.m === "-" ? "h-3" : "h-[13px]"}`}>
      {n.d > 0 && <span className="h-full w-[7px] shrink-0 border-r border-dotted border-[#b5b5b5]" />}
      {n.d > 0 && <span className="w-[7px] shrink-0" />}
      {n.d > 1 && <span className="h-full w-[7px] shrink-0 border-r border-dotted border-[#b5b5b5]" />}
      {n.d > 1 && <span className="w-[7px] shrink-0" />}
      <span className="flex w-3.5 shrink-0 items-center pl-[3px]">
        {box}
        <span className={`flex-1 ${twig}`} />
      </span>
      {n.icon ? (
        <span className="mr-0.5 flex w-3 shrink-0 items-center">{n.icon}</span>
      ) : (
        <span className={`mr-px w-0.5 shrink-0 ${twig}`} />
      )}
      <span
        className={`whitespace-nowrap leading-3 ${n.bold ? "bg-[#dcdcdc] pr-px font-bold" : ""}`}
      >
        {n.t}
      </span>
    </li>
  );
}

function ProjectBrowser() {
  return (
    <aside className="flex w-[149px] shrink-0 flex-col bg-[#f0f0f0] text-[#333]">
      <div className="flex h-[15px] shrink-0 items-center justify-between pr-0.5 pl-0.5 text-[#444]">
        <h2>Project Browser - Learning Revit...</h2>
        <Tool label="Close Project Browser">
          <Ico w={7} h={7}>
            <path d="m.8.8 5.400 5.400m0-5.400L.8 6.200" stroke="#222" strokeWidth="1.300" />
          </Ico>
        </Tool>
      </div>
      <div className="flex min-h-0 flex-1">
        <ul className="min-w-0 flex-1 overflow-hidden bg-white pl-[3px]">
          {tree.map((n) => (
            <TreeRow key={n.t + n.d} n={n} />
          ))}
        </ul>
        <div className="flex w-[11px] shrink-0 flex-col items-center py-px">
          <Chevron dir="up" />
          <div className="h-[228px] w-full bg-[#c9c9c9]" />
          <div className="mt-auto">
            <Chevron dir="down" />
          </div>
        </div>
      </div>
      <div className="flex h-3 shrink-0 items-center px-1">
        <Chevron dir="left" />
        <div className="mx-0.5 h-2.5 w-26 bg-[#c9c9c9]" />
        <div className="ml-auto pr-2.5">
          <Chevron dir="right" />
        </div>
      </div>
    </aside>
  );
}

export default function App() {
  return (
    <div className="flex h-screen min-h-[594px] flex-col overflow-hidden bg-[#cbcbcb] font-['Segoe_UI','Noto_Sans',sans-serif]">
      <TitleBar />
      <RibbonTabs />
      <Ribbon />
      <div className="flex h-5 shrink-0 items-center border-t border-[#c4dcd9] bg-[#d4ece8] px-1.5 text-[8px] leading-3 text-[#333]">
        Modify | Create Floor Boundary
      </div>
      <div className="flex min-h-0 flex-1 gap-[3px] border-t border-[#c0c8c8] text-[8px] leading-3">
        <Properties />
        <div className="flex min-w-0 flex-1 bg-[#f0f0f0] pb-0.5">
          <Canvas />
        </div>
        <ProjectBrowser />
      </div>
    </div>
  );
}
